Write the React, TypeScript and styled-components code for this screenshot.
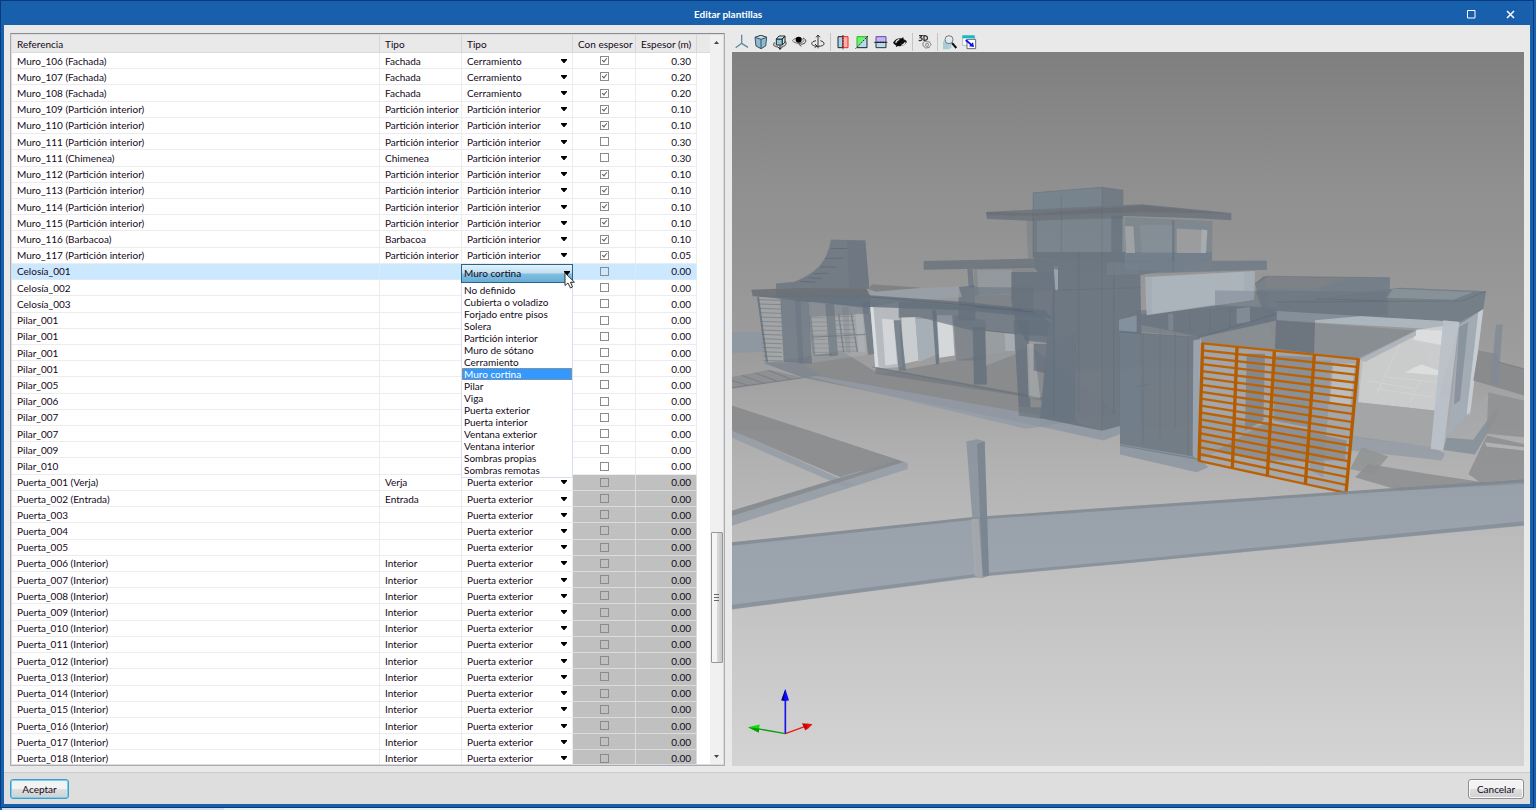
import React, { useState } from 'react';
import styled, { createGlobalStyle, css } from 'styled-components';

const GlobalStyle = createGlobalStyle`
  *, *::before, *::after { box-sizing: border-box; }
  html, body, #root { height: 100%; }
  body {
    margin: 0;
    overflow: hidden;
    background: #1a62b2;
    color: #140818;
    font: 10px/12px Lato, "Open Sans", sans-serif;
  }
  button, input, select { font: inherit; color: inherit; }
`;

/* ---------- window frame ---------- */

const Desktop = styled.div`
  height: 100%;
  display: flex;
  flex-direction: column;
  padding-right: 2px;
`;

const Behind = styled.div`
  height: 2px;
  margin-right: -2px;
  background: linear-gradient(90deg, #1a62b2 0 2px, #d3dbe6 2px 224px, #e8edf4 224px);
`;

const Window = styled.main`
  flex: 1;
  min-height: 0;
  display: flex;
  flex-direction: column;
  background: #1860ab;
  border: 1px solid #043a80;
  padding: 0 3px 3px;
`;

const TitleBar = styled.header`
  display: flex;
  align-items: center;
  height: 24px;
  flex: none;
`;

const Title = styled.h1`
  flex: 1;
  margin: 0;
  padding-top: 2px;
  text-align: center;
  color: #fff;
  font-size: 10px;
  line-height: 14px;
  font-weight: 700;
`;

const WindowButton = styled.button`
  width: 39px;
  height: 24px;
  padding: 3px 0 0;
  border: 0;
  background: none;
  color: #fff;
  display: grid;
  place-items: center;
`;

const Content = styled.div`
  flex: 1;
  min-height: 0;
  display: grid;
  grid-template-columns: minmax(0, 715fr) minmax(0, 792fr);
  gap: 7px;
  padding: 8px 6px 6px;
  background: #e9e9e9;
`;

const Footer = styled.footer`
  flex: none;
  display: flex;
  justify-content: space-between;
  align-items: flex-start;
  height: 32px;
  padding: 6px 6px 0;
  background: #dedede;
  border-top: 1px solid #cbcbcb;
`;

const PushButton = styled.button<{ $primary?: boolean }>`
  width: ${(p) => (p.$primary ? 59 : 56)}px;
  height: 20px;
  padding: 0;
  border: 1px solid ${(p) => (p.$primary ? '#3c9fce' : '#8e8e8e')};
  border-radius: 3px;
  background: linear-gradient(#f3f3f3 0 50%, #dfdfdf 50%, #d0d0d0);
  box-shadow: inset 0 0 0 1px ${(p) => (p.$primary ? '#6fd0f0' : '#fafafa')};
`;

/* ---------- table ---------- */

const GridFrame = styled.section`
  display: flex;
  min-width: 0;
  min-height: 0;
  border: 1px solid #a9abb0;
  border-top-color: #8b8d92;
  outline: 1px solid #dcdcde;
  outline-offset: -2px;
  padding: 1px;
  background: #fff;
`;

const TableArea = styled.div`
  flex: 1;
  min-width: 0;
  min-height: 0;
  overflow: hidden;
`;

const Table = styled.table`
  width: 100%;
  height: calc(100% + 3px);
  table-layout: fixed;
  border-collapse: separate;
  border-spacing: 0;
`;

const HeadCell = styled.th<{ $align?: string }>`
  height: 18px;
  padding: 1px 5px 0;
  font-weight: 400;
  text-align: ${(p) => p.$align ?? 'left'};
  white-space: nowrap;
  background: #e9e9e9;
  border-right: 1px solid #d6d6d6;
  border-bottom: 1px solid #dadada;
  &:last-child { border-right: 0; }
`;

type Tone = 'plain' | 'selected' | 'disabled';

const tones = {
  plain: { bg: '#fff', line: '#ececec' },
  selected: { bg: '#cce8ff', line: '#dbeaf6' },
  disabled: { bg: '#c0c0c0', line: '#dcdcdc' },
};

const Cell = styled.td<{ $tone: Tone; $align?: string }>`
  position: relative;
  padding: 0 5px;
  text-align: ${(p) => p.$align ?? 'left'};
  white-space: nowrap;
  background: ${(p) => tones[p.$tone].bg};
  border-right: 1px solid ${(p) => tones[p.$tone].line};
  border-bottom: 1px solid ${(p) => tones[p.$tone].line};
`;

const BlankCell = styled.td`
  padding: 0;
`;

const Picker = styled.div`
  display: flex;
  align-items: center;
  gap: 2px;
  height: 12px;
`;

const Select = styled.select`
  flex: 1;
  min-width: 0;
  height: 12px;
  padding: 0;
  border: 0;
  appearance: none;
  background: none;
  outline: none;
`;

const OpenPicker = styled.div`
  position: absolute;
  z-index: 2;
  top: 0;
  left: -1px;
  right: -1px;
`;

const OpenField = styled.div`
  display: flex;
  align-items: center;
  height: 19px;
  padding: 0 2px;
  border: 1px solid #2c628b;
  background: linear-gradient(#e3f2fa 0%, #bfdff1 48%, #84bfe0 52%, #68afd8 100%);
`;

const Options = styled.ul`
  margin: 0;
  padding: 1px 0;
  list-style: none;
  background: #fff;
  border: 1px solid #d5dfee;
  border-top: 0;
`;

const Option = styled.li<{ $active: boolean }>`
  height: 12px;
  padding-left: 1px;
  border: 1px solid transparent;
  line-height: 10px;
  ${(p) =>
    p.$active &&
    css`
      color: #fff;
      background: #3399ff;
      border: 1px dotted #c98b4a;
    `}
`;

const Pointer = styled.svg`
  position: absolute;
  top: 8px;
  right: -2px;
`;

const Tick = styled.input`
  position: relative;
  display: block;
  width: 9px;
  height: 9px;
  margin: 0 auto;
  appearance: none;
  border: 1px solid #8b8b8b;
  background: transparent;
  &:checked::after {
    content: '';
    position: absolute;
    left: 2px;
    top: 0;
    width: 3px;
    height: 5px;
    border: solid #5e5e5e;
    border-width: 0 1px 1px 0;
    transform: rotate(40deg);
  }
`;

/* ---------- scroll bar ---------- */

const ScrollTrack = styled.div`
  width: 13px;
  flex: none;
  display: flex;
  flex-direction: column;
  align-items: center;
  background: #f0f0f0;
`;

const ScrollButton = styled.button`
  width: 13px;
  height: 15px;
  padding: 0;
  border: 0;
  background: none;
  display: grid;
  place-items: center;
`;

const Spacer = styled.div<{ $grow: number }>`
  flex: ${(p) => p.$grow} 1 0;
`;

const Thumb = styled.div`
  flex: 129 1 0;
  width: 12px;
  display: grid;
  place-items: center;
  border: 1px solid #979797;
  border-radius: 1px;
  background: linear-gradient(90deg, #f5f5f5 0 45%, #dadada 55%, #c6c6c6);
`;

/* ---------- viewer ---------- */

const Viewer = styled.section`
  display: flex;
  flex-direction: column;
  min-width: 0;
  min-height: 0;
`;

const Toolbar = styled.div`
  flex: none;
  display: flex;
  align-items: center;
  height: 19px;
  padding: 0 0 1px 2px;
  gap: 3px;
`;

const ToolButton = styled.button`
  width: 16px;
  height: 16px;
  padding: 0;
  border: 0;
  background: none;
  display: block;
  svg { display: block; }
`;

const Divider = styled.span`
  width: 1px;
  height: 18px;
  margin: 0 1px;
  background: #c4c4c4;
`;

const Canvas = styled.div`
  flex: 1;
  min-height: 0;
  background: linear-gradient(#7f7f7f 0%, #8f8f8f 18%, #9d9d9d 43%, #b1b1b1 57%, #c1c1c2 75%, #d4d4d5 100%);
  svg { display: block; width: 100%; height: 100%; }
`;

/* ---------- data ---------- */

interface Row {
  ref: string;
  kind: string;
  type: string;
  thick: boolean;
  value: string;
  locked?: boolean;
}

const wall = (ref: string, kind: string, type: string, thick: boolean, value: string): Row => ({
  ref: `${ref} (${kind})`, kind, type, thick, value,
});
const PI = 'Partición interior';
const plain = (ref: string, type: string): Row => ({ ref, kind: '', type, thick: false, value: '0.00' });
const door = (n: number, kind: string): Row => {
  const id = `Puerta_${String(n).padStart(3, '0')}`;
  return { ref: kind ? `${id} (${kind})` : id, kind, type: 'Puerta exterior', thick: false, value: '0.00', locked: true };
};

const rows: Row[] = [
  wall('Muro_106', 'Fachada', 'Cerramiento', true, '0.30'),
  wall('Muro_107', 'Fachada', 'Cerramiento', true, '0.20'),
  wall('Muro_108', 'Fachada', 'Cerramiento', true, '0.20'),
  wall('Muro_109', PI, PI, true, '0.10'),
  wall('Muro_110', PI, PI, true, '0.10'),
  wall('Muro_111', PI, PI, false, '0.30'),
  wall('Muro_111', 'Chimenea', PI, false, '0.30'),
  wall('Muro_112', PI, PI, true, '0.10'),
  wall('Muro_113', PI, PI, true, '0.10'),
  wall('Muro_114', PI, PI, true, '0.10'),
  wall('Muro_115', PI, PI, true, '0.10'),
  wall('Muro_116', 'Barbacoa', PI, true, '0.10'),
  wall('Muro_117', PI, PI, true, '0.05'),
  ...['001', '002', '003'].map((n) => plain(`Celosía_${n}`, 'Muro cortina')),
  ...['001', '001', '001', '001', '005', '006', '007', '007', '009', '010'].map((n) => plain(`Pilar_${n}`, 'Pilar')),
  door(1, 'Verja'),
  door(2, 'Entrada'),
  door(3, ''),
  door(4, ''),
  door(5, ''),
  ...Array.from({ length: 13 }, (_, i) => door(i + 6, 'Interior')),
];

const SELECTED = 13;

const options = [
  'No definido', 'Cubierta o voladizo', 'Forjado entre pisos', 'Solera', PI, 'Muro de sótano',
  'Cerramiento', 'Muro cortina', 'Pilar', 'Viga', 'Puerta exterior', 'Puerta interior',
  'Ventana exterior', 'Ventana interior', 'Sombras propias', 'Sombras remotas',
];

/* ---------- icons ---------- */

const Caret = () => (
  <svg width="6" height="4" viewBox="0 0 6 4" aria-hidden="true"><path d="M0 0h6v1L3.500 4h-1L0 1z" fill="#000" /></svg>
);

const icons: Record<string, React.ReactNode> = {
  'Ejes': <path d="M23 2V28M23 28L5 41M23 28L42 40" fill="none" stroke="#5f8aa1" strokeWidth="4" />,
  'Perspectiva': (
    <g stroke="#3e505c" strokeWidth="3" strokeLinejoin="round">
      <path d="M24 4L41 10 38 36 24 44 9 36 6 10z" fill="#8bbcd4" />
      <path d="M6 10L24 16 41 10 24 4z" fill="#c3dfeb" /><path d="M24 16V44" />
    </g>
  ),
  'Rotar modelo': (
    <g strokeWidth="3" strokeLinejoin="round">
      <path d="M9 26C0 32 6 38 18 39M38 20c8 8 4 16-10 19" fill="none" stroke="#777" strokeWidth="4" />
      <path d="M13 15H31V33H13z" fill="#8fc4d4" stroke="#1c2b30" />
      <path d="M13 15L21 6H39L31 15zM31 15L39 6V24L31 33z" fill="#d3e8ee" stroke="#1c2b30" />
      <path d="M24 34V46M19 39L24 46 30 40" fill="none" stroke="#111" />
    </g>
  ),
  'Girar vista': (
    <g fill="none" stroke="#777" strokeWidth="3">
      <path d="M4 20C12 10 31 8 39 20 30 32 13 30 4 20z" fill="#ddd" />
      <circle cx="23" cy="17" r="9" fill="#000" stroke="none" />
      <path d="M36 12c14 6 10 18-7 19M29 26l-5 5 7 6" stroke="#444" />
    </g>
  ),
  'Orbitar': (
    <g fill="none" stroke="#333" strokeWidth="3">
      <path d="M24 4V43M18 10L24 3 30 10" />
      <path d="M18 20C-2 24 2 37 24 37S48 25 31 20M15 30l6 6-7 5" />
    </g>
  ),
  'Corte frontal': (
    <g strokeWidth="3">
      <path d="M9 8H24V41H9z" fill="#a8d4e8" stroke="#222" />
      <path d="M24 8H39V41H24z" fill="#ffb0b0" stroke="#f22" /><path d="M24 3V46" stroke="#222" strokeDasharray="5 3" />
    </g>
  ),
  'Corte diagonal': (
    <g strokeWidth="3">
      <path d="M9 8H39L9 41z" fill="#6cf56c" /><path d="M39 8V41H9z" fill="#b4dced" />
      <path d="M9 41V8H39" fill="none" stroke="#2ab32a" /><path d="M39 8V41H9" fill="none" stroke="#222" />
      <path d="M5 44L43 5" stroke="#222" strokeDasharray="5 3" />
    </g>
  ),
  'Corte horizontal': (
    <g strokeWidth="3">
      <path d="M9 8H39V25H9z" fill="#c6b3f6" stroke="#5b4a9c" /><path d="M9 25H39V41H9z" fill="#b4dced" stroke="#333" />
      <path d="M4 25H45" stroke="#111" strokeDasharray="5 3" />
    </g>
  ),
  'Ocultar': (
    <g>
      <path d="M3 26C13 9 34 9 45 24 34 40 13 41 3 26z" fill="#111" />
      <path d="M11 26C14 18 18 17 22 16M28 34c6 0 9-4 12-9" fill="none" stroke="#e9e9e9" strokeWidth="4" />
      <path d="M13 38L34 11" stroke="#000" strokeWidth="4" />
    </g>
  ),
  'Opciones 3D': (
    <g fill="none" stroke="#444" strokeWidth="3">
      <path d="M6 5h9l-5 6c8 0 8 11-5 8M21 5v14c14 2 14-16 0-14z" stroke="#333" strokeWidth="4" />
      <path d="M19 25c3-4 6-1 9-4 3 4 7 1 10 3 0 4 5 5 4 8-1 4-5 4-6 9-5-2-8 4-11 0-3-3-7-3-7-8s-1-5 1-8z" stroke="#777" />
      <path d="M28 27l-3 8 7 3 3-8z" stroke="#888" />
    </g>
  ),
  'Zoom': (
    <g>
      <path d="M3 22L10 16H28V40L22 46H3z" fill="#a9cbd8" /><path d="M3 22H22V46" fill="none" stroke="#c9dde5" strokeWidth="2" />
      <path d="M30 27L43 42" stroke="#111" strokeWidth="6" />
      <circle cx="21" cy="17" r="12" fill="#e2eff4" fillOpacity=".85" stroke="#777" strokeWidth="3" />
    </g>
  ),
  'Ventana': (
    <g>
      <path d="M5 6H40V34H5z" fill="#fff" stroke="#8aa" strokeWidth="2" /><path d="M4 4H41V13H4z" fill="#18b9c4" />
      <path d="M18 16H44V44H18z" fill="#fff" stroke="#667" strokeWidth="3" />
      <path d="M14 18L32 33" stroke="#11e" strokeWidth="5" /><path d="M39 39L24 37 36 25z" fill="#11e" />
    </g>
  ),
};

const toolGroups = [
  ['Ejes', 'Perspectiva', 'Rotar modelo', 'Girar vista', 'Orbitar'],
  ['Corte frontal', 'Corte diagonal', 'Corte horizontal', 'Ocultar'],
  ['Opciones 3D'],
  ['Zoom', 'Ventana'],
];

/* ---------- 3D scene ---------- */

type Poly = [points: string, fill: string, opacity?: number];
const Polys = ({ list }: { list: Poly[] }) => (
  <>{list.map(([points, fill, opacity], i) => <polygon key={i} points={points} fill={fill} fillOpacity={opacity ?? 1} />)}</>
);

const B = '#636f7c';
const L = '#c6d0da';

const garden: Poly[] = [
  ['0,0 230,0 498,90 355,130 325,140', '#8e8f91'],
  ['0,0 320,142 365,162 340,170 0,22', '#929ba5', 0.8],
  ['0,240 500,88 527,97 527,115 0,285', '#949ca5', 0.85],
  ['0,240 500,88 510,96 0,256', '#7e8286', 0.6],
  ['0,335 718,260 1200,226 2376,146 2376,285 1200,396 755,435 0,535', '#8896a5', 0.65],
  ['0,335 718,260 1200,226 2376,146 2376,155 1200,235 718,268 0,345', '#7b8085', 0.6],
  ['0,522 730,430 1200,387 2376,272 2376,284 1200,396 755,437 0,536', '#7f878f', 0.6],
  ['703,33 735,26 758,32 771,435 752,442 735,440', '#8b949d', 0.9],
  ['735,40 758,32 771,435 752,435', '#75808b', 0.7],
  ['718,265 740,265 752,442 728,436', '#a6abaf', 0.8],
];

const leftWing: Poly[] = [
  ['0,455 92,455 100,515 0,517', '#8795a5', 0.6],
  ['0,590 110,568 215,592 0,625', '#8c8e91', 0.9],
  ['0,675 520,845 400,870 330,870 0,752', '#8c8d8f'],
  ['95,548 330,512 440,580 900,500 1160,700 925,738 215,592', '#8a8b8d'],
  ['215,585 265,588 925,705 960,735 880,745', '#929ba6', 0.8],
  ['925,710 960,715 1110,750 1165,730 1165,760 1115,780 925,738', '#8c96a2', 0.8],
  ['95,548 210,548 262,585 215,592', '#7e8790', 0.7],
  ['76,350 410,360 425,520 240,548 100,545', L, 0.18],
  ['132,310 185,305 400,320 415,350 415,385 132,350', B, 0.55],
  ['145,355 230,360 240,550 155,545', B, 0.65],
  ['188,360 205,360 215,550 200,548', B, 0.4],
  ['230,365 410,375 410,400 232,410', B, 0.4],
  ['230,408 238,408 250,525 242,525', B, 0.5],
  ['280,370 306,370 318,525 292,528', B, 0.6],
  ['330,380 350,380 355,520 342,515', B, 0.2],
  ['370,400 392,400 400,515 380,515', L, 0.25],
  ['390,365 412,365 430,520 408,524', B, 0.65],
  ['415,380 500,365 510,560 430,565', '#c6ccd2', 0.65],
  ['415,380 424,380 440,560 430,565', '#e2e6e9', 0.8],
  ['450,415 485,418 495,550 460,555', '#d9dcdf', 0.8],
  ['508,410 550,410 560,540 516,550', '#d2d6d9', 0.85],
  ['550,415 615,415 620,520 560,545', '#a9b1b9', 0.9],
  ['615,405 660,405 668,525 622,532', '#dcdfe1', 0.9],
  ['485,420 505,420 522,570 500,570', B, 0.7],
  ['600,390 612,390 622,550 612,552', B, 0.8],
  ['500,362 900,390 960,430 960,470 720,450 560,410 500,412', B, 0.65],
  ['665,405 760,420 765,540 672,540', B, 0.45],
  ['680,320 728,315 730,420 680,420', B, 0.7],
  ['722,440 760,440 765,612 726,612', B, 0.8],
  ['760,450 850,460 855,520 762,555', '#999da1', 0.8],
  ['818,458 848,460 848,512 820,512', L, 0.3],
  ['430,560 960,655 960,668 860,645 430,580', '#737a82', 0.8],
  ['845,420 890,420 895,680 860,680', B, 0.75],
  ['885,490 905,490 925,655 890,650', '#a4a8ab', 0.8],
  ['905,490 945,490 945,580 905,570', B, 0.7],
  ['860,680 920,680 1000,700 925,715 860,705', B, 0.6],
  ['415,332 680,318 690,350 420,370', '#9aa3ad', 0.7],
  ['62,346 415,345 700,365 940,390 960,415 700,390 415,380 230,365', B, 0.8],
  ['410,325 420,312 570,322 430,334', '#77797c', 0.7],
  ['58,328 400,316 415,350 62,348', '#6b7077', 0.85],
  ['575,242 905,235 905,262 575,268', '#727981'],
  ['706,266 722,266 726,322 710,320', B, 0.65],
  ['725,262 905,258 975,260 975,330 728,345', B, 0.3],
  ['735,268 840,268 840,345 740,345', L, 0.2],
  ['838,275 965,275 970,490 880,480 850,420 838,360', B, 0.75],
  ['728,320 905,322 905,390 728,378', B, 0.5],
];

const tower: Poly[] = [
  ['903,38 1110,21 1174,30 1174,250 903,230', '#6a7580', 0.8],
  ['903,38 1110,21 1110,80 905,90', '#7c8894', 0.6],
  ['915,120 1180,115 1180,215 915,218', '#828d98', 0.5],
  ['883,122 905,120 905,235 888,235', B, 0.3],
  ['905,215 1175,215 1440,215 1440,240 1225,285 1230,550 1165,570 1165,735 1110,750 925,712 945,480 965,330 905,260', '#6a7581', 0.92],
  ['945,480 1030,460 1040,730 925,712', '#687481', 0.5],
  ['1030,570 1110,570 1110,748 1030,725', '#747c84', 0.7],
  ['1125,250 1220,250 1220,280 1125,280', '#8793a0', 0.5],
  ['965,258 978,258 978,330 970,330', L, 0.5],
  ['1138,90 1170,90 1170,215 1138,215', '#586470', 0.4],
  ['762,95 905,88 1230,72 1498,98 1498,120 1390,114 1180,107 905,122 765,116', '#6f757d', 0.9],
  ['762,95 905,100 1230,76 1380,90 1490,100 1225,95 905,106 765,105', '#64696f', 0.5],
  ['905,240 1604,242 1604,268 1150,280 905,262', '#6c7782', 0.75],
];

const rightWing: Poly[] = [
  ['75,110 338,122 335,272 75,270', '#76828d', 0.65],
  ['75,138 100,138 105,218 78,218', '#a2a5a7', 0.9],
  ['120,135 220,135 220,218 125,218', '#8d98a3', 0.4],
  ['230,145 322,150 318,218 230,218', '#9c9d9e', 0.95],
  ['305,146 322,150 318,218 302,218', L, 0.3],
  ['216,120 223,120 223,275 216,275', B, 0.6],
  ['465,310 490,288 870,292 865,420 500,430', '#717b86', 0.8],
  ['495,290 740,292 650,322 495,322', '#7f8286', 0.8],
  ['655,325 735,300 870,292 865,360', '#747f8a', 0.7],
  ['650,355 900,322 1158,333 1150,385 1080,425 530,395 530,365', '#6f7a85', 0.85],
  ['880,325 1120,335 1060,358 860,352', '#8f989f', 0.7],
  ['530,392 1080,425 1070,450 530,420', '#aeb7bf', 0.95],
  ['950,448 1078,430 1030,600 1005,690 775,665 790,530', '#cdcfd1', 0.95],
  ['780,530 948,450 1020,640 1000,690 775,662', '#c9cacb', 0.7],
  ['950,448 1035,450 1030,495 940,478', '#dfe1e3', 0.8],
  ['945,560 965,552 1020,572 1020,585 915,576', '#dddfe1', 0.9],
  ['770,665 1005,690 1000,800 755,770', '#a3a4a6', 0.95],
  ['750,765 1000,800 1035,820 1025,840 740,808', '#8e98a3', 0.7],
  ['1030,420 1078,425 1030,810 992,805', '#b9c1c9', 0.95],
  ['1078,430 1150,385 1105,705 1042,775', '#a3adb7', 0.85],
  ['1078,440 1105,425 1080,660 1062,672', '#848e98', 0.8],
  ['1135,395 1150,385 1110,705 1100,700', '#d0d5d9', 0.8],
  ['1100,705 1165,640 1190,650 1128,800 1030,805 1040,770', '#a5a8ab', 0.6],
  ['1040,772 1120,778 1190,680 1190,710 1125,822 1030,808', '#858f99', 0.85],
  ['1135,510 1190,520 1195,545 1272,565 1272,645 1120,600', '#8a8b8c'],
  ['1188,433 1208,432 1195,610 1172,605', '#808a95', 0.8],
  ['1165,635 1272,660 1272,770 1160,760', '#8e8f90', 0.85],
  ['1160,765 1272,790 1272,895 1140,905 1105,880', '#8d8e8f', 0.85],
  ['785,800 865,828 820,880 750,865', '#929394', 0.9],
  ['765,890 805,850 985,880 1150,905 1272,895 1272,910 900,930', '#8e8f91', 0.9],
  ['1155,785 1272,800 1272,810 1160,798', '#b9babb', 0.8],
  ['55,420 300,470 500,430 530,395 500,380 330,375 105,405', '#6b7682', 0.85],
  ['465,330 860,335 860,400 645,420 640,510 525,490 500,420', '#6b7682', 0.6],
  ['345,330 505,335 505,425 345,385', '#6b7682', 0.6],
  ['60,455 300,470 295,840 60,795', '#6d7883', 0.92],
  ['60,455 120,460 120,800 60,795', '#73808c', 0.5],
  ['140,610 265,590 280,835 150,780', '#757d85', 0.6],
  ['60,790 295,830 325,860 290,875 60,822', '#8c96a0', 0.85],
  ['300,470 530,420 950,450 775,540 640,520 305,488', '#888d91', 0.92],
  ['528,420 645,428 642,520 525,505', '#6c757e', 0.95],
  ['775,535 948,450 948,465 795,545', '#a8afb6', 0.8],
  ['305,488 775,540 740,938 297,842', '#a2a6aa', 0.85],
  ['305,700 480,735 350,815 300,835', '#90969b', 0.5],
  ['440,520 495,520 490,720 435,750', '#7b838c', 0.85],
  ['525,525 640,530 625,740 520,720', '#858c94', 0.85],
  ['640,540 695,540 670,890 630,870', '#8b949e', 0.7],
  ['700,550 765,550 750,680 690,670', '#c5c7c9', 0.7],
  ['350,810 500,725 740,780 735,840 500,840 380,820', '#858a8e', 0.75],
  ['280,480 304,475 297,842 278,825', '#a4adb6', 0.8],
  ['100,390 530,380 530,420 310,470 55,450', '#6a7581', 0.6],
  ['57,418 110,405 110,455 57,450', '#8a97a4', 0.8],
  ['410,385 450,380 450,425 410,430', '#8e99a4', 0.6],
  ['205,400 220,400 220,450 205,450', '#9aa3ab', 0.35],
  ['135,290 465,272 462,358 140,405', '#a5aeb6', 0.95],
  ['155,290 432,275 432,335 345,335 345,372 155,400', '#acb4bb', 0.9],
  ['345,330 462,332 462,358 345,375', '#8b959f', 0.7],
  ['20,245 500,240 500,268 20,285', '#74808c', 0.5],
];

const Line = ({ d, color = B, width = 2, opacity = 0.6 }: { d: string; color?: string; width?: number; opacity?: number }) => (
  <path d={d} fill="none" stroke={color} strokeWidth={width} strokeOpacity={opacity} />
);

const slats = Array.from({ length: 15 }, (_, i) => `M${80 + i},${358 + i * 13}L${150},${360 + i * 13}`).join('');
const innerSlats = Array.from({ length: 9 }, (_, i) => `M${236 + i},${412 + i * 13}h46M${306 + i},${408 + i * 13}h60`).join('');

/* Louvre panel: a projected quad with vertical mullions and horizontal blades. */
const quad = { tl: [308, 489], tr: [776, 536], bl: [297, 841], br: [739, 937] };
const mix = (a: number[], b: number[], t: number) => [a[0] + (b[0] - a[0]) * t, a[1] + (b[1] - a[1]) * t];
const BLADES = 17;
const blades = Array.from({ length: BLADES + 1 }, (_, i) => {
  const a = mix(quad.tl, quad.bl, i / BLADES);
  const b = mix(quad.tr, quad.br, i / BLADES);
  return `M${a.join()}L${b.join()}`;
}).join('');
const mullions = 'M308,487L297,842M411,500L397,862M523,512L502,886M643,523L616,911M775,534L738,938';

const Scene = () => (
  <svg viewBox="732 52 792 713" preserveAspectRatio="none" role="img" aria-label="Vista 3D del edificio">
    <g transform="translate(732 180) scale(.33333)">
      <Polys list={leftWing} />
      <path d="M132 322V310L185 305Q232 288 262 258Q290 225 297 178L400 181 412 325z" fill="#737c85" />
      <path d="M345 181L400 181 412 325 352 325z" fill="#6a7580" fillOpacity=".6" />
      <Line d="M297 205h48M280 235l55-2M265 259l48 2M245 280l42-1M230 292l40 3M205 303l45 3" color="#555e67" width={3} opacity={0.5} />
      <Line d={slats} color="#6b7580" opacity={0.9} />
      <Line d="M78 350L105 545" width={6} opacity={0.8} />
      <Line d={innerSlats} color="#76808a" opacity={0.7} />
      <Line d="M240 470L400 462M320 400L335 515M358 400L376 515M250 525L300 522" width={4} />
      <Line d="M420 560L960 660M0 622L215 592M0 600L50 615M30 585L100 610M70 578L140 604M110 570L180 597" color="#5f666e" width={3} opacity={0.4} />
      <Line d="M415 350L870 388M728 380L905 395M762 450L850 460" color="#4d5864" width={3} opacity={0.4} />
      <Polys list={tower} />
      <Line d="M903 38L1110 21 1174 30M1110 21V745M988 42V215M903 38V230M1040 217V700M965 330V700M1145 250V700M925 712L1110 750 1165 735M965 330L1225 322" color="#4d5968" width={3} opacity={0.2} />
    </g>
    <g transform="translate(1100 180) scale(.33333)">
      <Polys list={rightWing} />
      <Line d="M465 310L500 288 870 292M530 365L1085 362 1158 333M650 355L860 362M1078 430L1150 385M60 455L300 470 530 400M60 795L295 835M1195 545L1272 565" color="#56616d" width={3} opacity={0.35} />
      <Line d="M860 590L1010 605M830 625L1000 650M900 490L830 640M960 600L930 665M800 600L940 625" color="#dcdee0" width={3} opacity={0.4} />
      <Line d="M180 450V770M225 455V740M130 460V790M265 470V825M270 400V455M330 385V460M390 380V440M105 620L150 610" color="#586472" width={4} opacity={0.2} />
      <Line d={blades} color="#bd6203" width={7} opacity={1} />
      <Line d={mullions} color="#b35c02" width={10} opacity={1} />
    </g>
    <g transform="translate(732 430) scale(.33333)">
      <Polys list={garden} />
      <path d="M160 908L75 893" stroke="#0a9c14" strokeWidth="4" /><path d="M48 889L83 881 80 905z" fill="#0be00b" /><path d="M48 889L82 893 80 905z" fill="#069a06" />
      <path d="M160 908L220 886" stroke="#f21616" strokeWidth="4" /><path d="M241 880L210 877 220 899z" fill="#c40808" /><path d="M225 878L241 880 226 896z" fill="#f01010" />
      <path d="M160 908V805" stroke="#1616e8" strokeWidth="5" /><path d="M160 774L171 808Q160 812 148 808z" fill="#0b0bff" /><path d="M160 774L156 809 148 808z" fill="#06067a" />
    </g>
  </svg>
);

/* ---------- page ---------- */

function TypeOpen() {
  const [value, setValue] = useState('Muro cortina');
  return (
    <OpenPicker>
      <OpenField>
        <Select aria-label="Tipo de Celosía_001" value={value} onChange={(e) => setValue(e.target.value)}>
          {options.map((o) => <option key={o}>{o}</option>)}
        </Select>
        <Caret />
      </OpenField>
      <Options role="listbox" aria-label="Tipos">
        {options.map((o) => (
          <Option key={o} role="option" aria-selected={o === value} $active={o === value} onClick={() => setValue(o)}>{o}</Option>
        ))}
      </Options>
      <Pointer width="11" height="17" viewBox="0 0 11 17" aria-hidden="true">
        <path d="M1 1V13.500L4 11 6.500 16 8.500 15 6.500 10.200H10.500z" fill="#fff" stroke="#333" />
      </Pointer>
    </OpenPicker>
  );
}

function TableRow({ row, index }: { row: Row; index: number }) {
  const base: Tone = index === SELECTED ? 'selected' : 'plain';
  const tail: Tone = row.locked ? 'disabled' : base;
  return (
    <tr>
      <Cell $tone={base}>{row.ref}</Cell>
      <Cell $tone={base}>{row.kind}</Cell>
      <Cell $tone={base}>
        {index === SELECTED ? (
          <TypeOpen />
        ) : (
          <Picker>
            <Select aria-label={`Tipo de ${row.ref}`} defaultValue={row.type}>
              {options.map((o) => <option key={o}>{o}</option>)}
            </Select>
            <Caret />
          </Picker>
        )}
      </Cell>
      <Cell $tone={tail}>
        <Tick type="checkbox" aria-label={`Con espesor, ${row.ref}`} defaultChecked={row.thick} disabled={row.locked} />
      </Cell>
      <Cell $tone={tail} $align="right">{row.value}</Cell>
      <BlankCell />
    </tr>
  );
}

export default function App() {
  return (
    <Desktop>
      <GlobalStyle />
      <Window>
        <TitleBar>
          <Title>Editar plantillas</Title>
          <WindowButton aria-label="Maximizar">
            <svg width="9" height="9" viewBox="0 0 9 9"><path d="M.5 .5h7.500v7.500H.5z" fill="none" stroke="#fff" /></svg>
          </WindowButton>
          <WindowButton aria-label="Cerrar">
            <svg width="9" height="9" viewBox="0 0 9 9"><path d="M1 1L8 8M8 1L1 8" stroke="#fff" strokeWidth="1.500" /></svg>
          </WindowButton>
        </TitleBar>
        <Content>
          <GridFrame>
            <TableArea>
              <Table>
                <colgroup>
                  <col />
                  <col style={{ width: 82 }} />
                  <col style={{ width: 111 }} />
                  <col style={{ width: 63 }} />
                  <col style={{ width: 61 }} />
                  <col style={{ width: 13 }} />
                </colgroup>
                <thead>
                  <tr>
                    <HeadCell>Referencia</HeadCell>
                    <HeadCell>Tipo</HeadCell>
                    <HeadCell>Tipo</HeadCell>
                    <HeadCell $align="center">Con espesor</HeadCell>
                    <HeadCell $align="right">Espesor (m)</HeadCell>
                    <HeadCell aria-hidden="true" />
                  </tr>
                </thead>
                <tbody>
                  {rows.map((row, i) => <TableRow key={i} row={row} index={i} />)}
                </tbody>
              </Table>
            </TableArea>
            <ScrollTrack>
              <ScrollButton aria-label="Subir">
                <svg width="5" height="3" viewBox="0 0 5 3"><path d="M0 3L2.500 0 5 3z" fill="#444" /></svg>
              </ScrollButton>
              <Spacer $grow={485} />
              <Thumb>
                <svg width="5" height="7" viewBox="0 0 5 7"><path d="M0 .5h5M0 3.500h5M0 6.500h5" stroke="#666" /></svg>
              </Thumb>
              <Spacer $grow={87} />
              <ScrollButton aria-label="Bajar">
                <svg width="5" height="3" viewBox="0 0 5 3"><path d="M0 0h5L2.500 3z" fill="#444" /></svg>
              </ScrollButton>
            </ScrollTrack>
          </GridFrame>
          <Viewer>
            <Toolbar>
              {toolGroups.map((group, g) => (
                <React.Fragment key={g}>
                  {g > 0 && <Divider />}
                  {group.map((name) => (
                    <ToolButton key={name} aria-label={name} title={name}>
                      <svg width="16" height="16" viewBox="0 0 48 48">{icons[name]}</svg>
                    </ToolButton>
                  ))}
                </React.Fragment>
              ))}
            </Toolbar>
            <Canvas><Scene /></Canvas>
          </Viewer>
        </Content>
        <Footer>
          <PushButton $primary>Aceptar</PushButton>
          <PushButton>Cancelar</PushButton>
        </Footer>
      </Window>
      <Behind />
    </Desktop>
  );
}
